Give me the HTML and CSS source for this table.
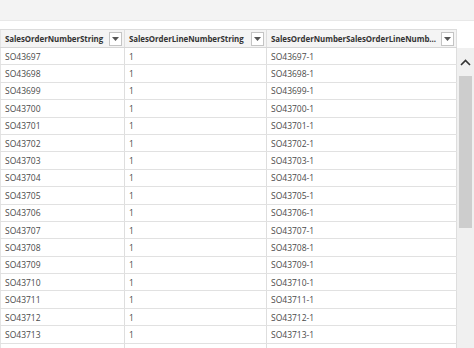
FILE: index.html
```html
<!DOCTYPE html>
<html>
<head>
<meta charset="utf-8">
<link rel="stylesheet" href="styles.css">
</head>
<body>
<div class="topbar"></div>
<div class="area">
  <div class="grid">
    <div class="row head">
      <div class="cell c1"><span class="hd">SalesOrderNumberString</span><span class="dd"><svg width="7" height="4" viewBox="0 0 7 4"><path d="M0 0H7L3.5 4Z" fill="#555"/></svg></span></div>
      <div class="cell c2"><span class="hd">SalesOrderLineNumberString</span><span class="dd"><svg width="7" height="4" viewBox="0 0 7 4"><path d="M0 0H7L3.5 4Z" fill="#555"/></svg></span></div>
      <div class="cell c3"><span class="hd">SalesOrderNumberSalesOrderLineNumb…</span><span class="dd"><svg width="7" height="4" viewBox="0 0 7 4"><path d="M0 0H7L3.5 4Z" fill="#555"/></svg></span></div>
    </div>
    <div class="body" id="body"></div>
  </div>
  <div class="scroll">
    <div class="sc-head"></div>
    <div class="sc-track">
      <div class="sc-up"><svg width="11" height="7" viewBox="0 0 11 7"><path d="M1 6L5.5 1.5L10 6" fill="none" stroke="#333" stroke-width="1.6"/></svg></div>
      <div class="sc-thumb"></div>
    </div>
  </div>
</div>
<script>
var b=document.getElementById('body');var h='';
for(var i=0;i<17;i++){var n='SO'+(43697+i);h+='<div class="row"><div class="cell c1">'+n+'</div><div class="cell c2">1</div><div class="cell c3">'+n+'-1</div></div>';}
h+='<div class="row"><div class="cell c1"></div><div class="cell c2"></div><div class="cell c3"></div></div>';
b.innerHTML=h;
</script>
</body>
</html>
```

FILE: styles.css
```css
html,body{margin:0;padding:0;background:#fff;}
body{font-family:"Open Sans","Noto Sans",sans-serif;font-size:8.5px;color:#4a4a4a;width:474px;height:348px;overflow:hidden;}
.topbar{height:20px;background:#f3f3f3;border-bottom:1px solid #e8e8e8;}
.area{display:flex;margin-top:8px;}
.grid{width:457px;flex:none;}
.row{display:flex;height:16.4px;border-bottom:1px solid #e1e1e1;}
.row.head{height:17px;background:#f4f4f4;border-top:1px solid #dcdcdc;border-bottom:1px solid #d6d6d6;}
.cell{box-sizing:border-box;border-right:1px solid #dedede;padding-left:4px;display:flex;align-items:center;white-space:nowrap;overflow:hidden;}
.c1{width:125px;border-left:1px solid #e4e4e4;}
.c2{width:142px;}
.c3{width:190px;}
.head .cell{justify-content:space-between;padding-right:2px;}
.hd{font-weight:700;color:#333;font-size:7.9px;letter-spacing:-0.05px;}
.dd{width:11px;height:12px;border:1px solid #c4c4c4;background:#fff;display:flex;align-items:center;justify-content:center;flex:none;margin-left:2px;}
.scroll{width:17px;flex:none;display:flex;flex-direction:column;}
.sc-head{height:19px;}
.sc-track{flex:1;background:#f0f0f0;height:330px;display:flex;flex-direction:column;align-items:center;}
.sc-up{height:28px;display:flex;align-items:center;justify-content:center;}
.sc-thumb{width:13px;height:152px;background:#cdcdcd;}
```
